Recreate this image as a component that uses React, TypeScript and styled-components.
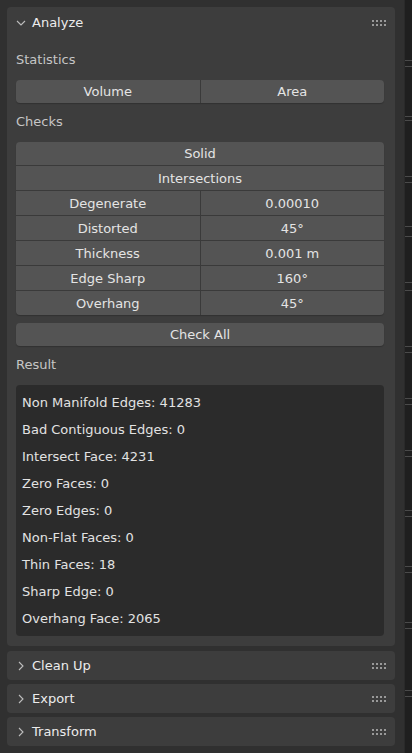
import { createGlobalStyle, styled } from 'styled-components';

const GlobalStyle = createGlobalStyle`
  html, body {
    margin: 0;
    padding: 0;
    background: #303030;
  }
  body {
    font-family: 'DejaVu Sans', 'Liberation Sans', sans-serif;
    font-size: 13px;
    color: #e6e6e6;
  }
`;

const checks: [string, string][] = [
  ['Degenerate', '0.00010'],
  ['Distorted', '45°'],
  ['Thickness', '0.001 m'],
  ['Edge Sharp', '160°'],
  ['Overhang', '45°'],
];

const results = [
  'Non Manifold Edges: 41283',
  'Bad Contiguous Edges: 0',
  'Intersect Face: 4231',
  'Zero Faces: 0',
  'Zero Edges: 0',
  'Non-Flat Faces: 0',
  'Thin Faces: 18',
  'Sharp Edge: 0',
  'Overhang Face: 2065',
];

const collapsed = ['Clean Up', 'Export', 'Transform'];

// y positions of the separators on the dark strip to the right
const stripMarks = [60, 66, 116, 120, 176, 182, 226, 236, 282, 290, 346, 352, 398, 404, 450, 456, 510, 516, 566, 572, 622, 628, 690, 696];

function Chevron({ open }: { open: boolean }) {
  return (
    <svg width="10" height="10" viewBox="0 0 10 10">
      {open ? (
        <polyline points="1,3 5,7 9,3" fill="none" stroke="#bdbdbd" strokeWidth="1.1" />
      ) : (
        <polyline points="3,1 7,5 3,9" fill="none" stroke="#bdbdbd" strokeWidth="1.1" />
      )}
    </svg>
  );
}

function Grip() {
  return (
    <GripBox>
      {Array.from({ length: 8 }).map((_, i) => (
        <GripDot key={i} />
      ))}
    </GripBox>
  );
}

export default function App() {
  return (
    <>
      <GlobalStyle />
      <Screen>
        <Sidebar>
          <Panel>
            <PanelHeader>
              <Chevron open />
              <HeaderTitle>Analyze</HeaderTitle>
              <Grip />
            </PanelHeader>
            <PanelBody>
              <SectionLabel>Statistics</SectionLabel>
              <ButtonGroup>
                <Row>
                  <Cell>Volume</Cell>
                  <Cell>Area</Cell>
                </Row>
              </ButtonGroup>

              <SectionLabel $top={5}>Checks</SectionLabel>
              <ButtonGroup>
                <Row $first>
                  <Cell>Solid</Cell>
                </Row>
                <Row>
                  <Cell>Intersections</Cell>
                </Row>
                {checks.map(([name, value]) => (
                  <Row key={name}>
                    <Cell>{name}</Cell>
                    <Cell>{value}</Cell>
                  </Row>
                ))}
              </ButtonGroup>

              <ButtonGroup $top={8}>
                <Row $first>
                  <Cell>Check All</Cell>
                </Row>
              </ButtonGroup>

              <SectionLabel $top={5}>Result</SectionLabel>
              <ResultBox>
                {results.map(line => (
                  <ResultLine key={line}>{line}</ResultLine>
                ))}
              </ResultBox>
            </PanelBody>
          </Panel>

          {collapsed.map(title => (
            <CollapsedPanel key={title}>
              <Chevron open={false} />
              <HeaderTitle>{title}</HeaderTitle>
              <Grip />
            </CollapsedPanel>
          ))}
        </Sidebar>
        <Strip>
          {stripMarks.map(y => (
            <StripMark key={y} style={{ top: y }} />
          ))}
        </Strip>
      </Screen>
    </>
  );
}

const Screen = styled.div`
  width: 412px;
  height: 753px;
  display: flex;
  background: #303030;
  overflow: hidden;
`;

const Sidebar = styled.div`
  width: 388px;
  padding: 7px 9px 0 7px;
  display: flex;
  flex-direction: column;
  gap: 4px;
`;

const Panel = styled.div`
  background: #3d3d3d;
  border-radius: 4px;
  display: flex;
  flex-direction: column;
  margin-bottom: 1px;
`;

const PanelHeader = styled.div`
  height: 31px;
  display: flex;
  align-items: center;
  gap: 6px;
  padding: 0 8px 0 9px;
`;

const CollapsedPanel = styled(PanelHeader)`
  height: 29px;
  background: #3d3d3d;
  border-radius: 4px;
`;

const HeaderTitle = styled.span`
  flex: 1;
  font-size: 13px;
  color: #ececec;
`;

const GripBox = styled.div`
  display: grid;
  grid-template-columns: repeat(4, 2px);
  grid-auto-rows: 2px;
  gap: 2px 2px;
  margin-right: 1px;
`;

const GripDot = styled.div`
  background: #9a9a9a;
`;

const PanelBody = styled.div`
  display: flex;
  flex-direction: column;
  padding: 8px 11px 10px 9px;
`;

const SectionLabel = styled.div<{ $top?: number }>`
  height: 28px;
  line-height: 28px;
  margin-top: ${({ $top }) => $top ?? 0}px;
  margin-bottom: 6px;
  color: #c6c6c6;
`;

const ButtonGroup = styled.div<{ $top?: number }>`
  margin-top: ${({ $top }) => $top ?? 0}px;
  display: flex;
  flex-direction: column;
  border-radius: 4px;
  overflow: hidden;
  background: #545454;
  box-shadow: 0 1px 1px rgba(0, 0, 0, 0.2);
`;

const Row = styled.div<{ $first?: boolean }>`
  display: flex;
  height: ${({ $first }) => ($first ? 23 : 24)}px;
  border-top: ${({ $first }) => ($first ? 'none' : '1px solid #3a3a3a')};

  &:first-child {
    height: 23px;
    border-top: none;
  }
`;

const Cell = styled.div`
  flex: 1;
  display: flex;
  align-items: center;
  justify-content: center;
  color: #e4e4e4;

  & + & {
    border-left: 1px solid #3a3a3a;
  }
`;

const ResultBox = styled.div`
  background: #2b2b2b;
  border-radius: 4px;
  padding: 4px 6px;
  display: flex;
  flex-direction: column;
`;

const ResultLine = styled.div`
  height: 27px;
  line-height: 27px;
  color: #e2e2e2;
  white-space: nowrap;
`;

const Strip = styled.div`
  position: relative;
  flex: 1;
  margin-left: 0;
  background: #1f1f1f;
  border-left: 1px solid #2a2a2a;
`;

const StripMark = styled.div`
  position: absolute;
  left: 0;
  right: 0;
  height: 1px;
  background: #4a4a4a;
`;
